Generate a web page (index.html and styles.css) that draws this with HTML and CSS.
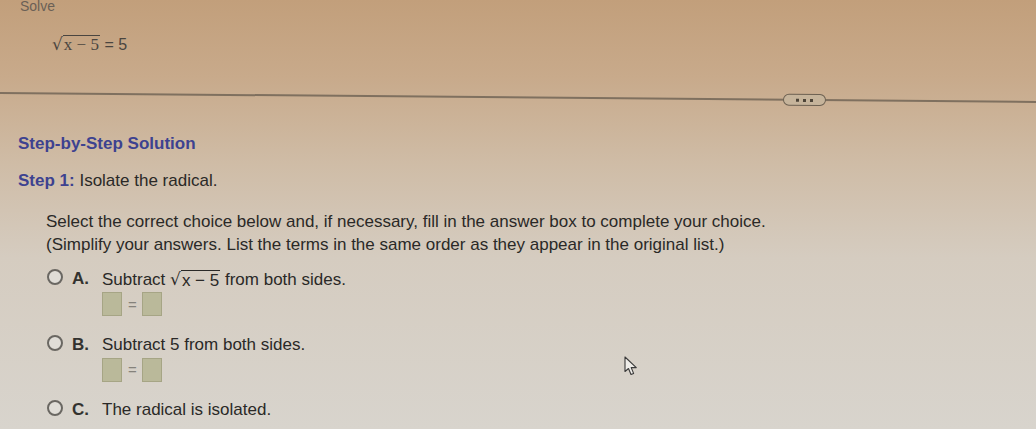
FILE: index.html
```html
<!DOCTYPE html>
<html>
<head>
<meta charset="utf-8">
<link rel="stylesheet" href="styles.css">
</head>
<body>
<div class="page">
  <div class="solve">Solve</div>
  <div class="eq">
    <span class="rad"><span class="rsign">√</span><span class="rbody">x − 5</span></span><span class="eqrest"> = 5</span>
  </div>
  <div class="divider"><span class="pill"><i></i><i></i><i></i></span></div>
  <h2 class="title">Step-by-Step Solution</h2>
  <p class="step"><b>Step 1:</b> Isolate the radical.</p>
  <p class="instr">Select the correct choice below and, if necessary, fill in the answer box to complete your choice.<br>(Simplify your answers. List the terms in the same order as they appear in the original list.)</p>
  <div class="choices">
    <div class="choice">
      <div class="row"><span class="radio"></span><b class="letter">A.</b><span class="ctext">Subtract <span class="rad small"><span class="rsign">√</span><span class="rbody">x − 5</span></span> from both sides.</span></div>
      <div class="boxes"><span class="box"></span><span class="eqs">=</span><span class="box"></span></div>
    </div>
    <div class="choice">
      <div class="row"><span class="radio"></span><b class="letter">B.</b><span class="ctext">Subtract 5 from both sides.</span></div>
      <div class="boxes"><span class="box"></span><span class="eqs">=</span><span class="box"></span></div>
    </div>
    <div class="choice">
      <div class="row"><span class="radio"></span><b class="letter">C.</b><span class="ctext">The radical is isolated.</span></div>
    </div>
  </div>
  <svg class="cursor" width="14" height="20" viewBox="0 0 14 20"><path d="M1 1 L1 15.5 L4.5 12.5 L7 18.5 L9.6 17.4 L7.2 11.6 L12.3 11.6 Z" fill="#efede9" stroke="#3a3a3a" stroke-width="1.1" stroke-linejoin="round"/></svg>
</div>
</body>
</html>
```
FILE: styles.css
```css
html, body { margin: 0; padding: 0; }
body {
  width: 1036px;
  height: 429px;
  overflow: hidden;
  background: linear-gradient(180deg, #c29f7b 0%, #c8aa8b 18%, #cfbca6 38%, #d5ccc0 60%, #d8d4cd 100%);
  font-family: "Liberation Sans", Arial, sans-serif;
  color: #2a2927;
}
.page { position: relative; height: 429px; }
.solve {
  padding-left: 20px;
  font-size: 14px;
  line-height: 12px;
  height: 12px;
  color: #6b6056;
}
.eq {
  padding-left: 52px;
  margin-top: 22px;
  height: 20px;
  font-family: "Liberation Serif", "Times New Roman", serif;
  font-size: 17px;
  color: #4a4540;
}
.rad { display: inline-flex; align-items: flex-end; }
.rsign { font-family: "DejaVu Sans", sans-serif; font-size: 17px; line-height: 20px; }
.rbody { border-top: 1.4px solid #4a4540; padding: 0 1px; line-height: 18px; }
.eqrest { font-family: "Liberation Sans", Arial, sans-serif; font-size: 16px; }
.divider {
  margin-top: 44px;
  height: 1.5px;
  background: #7f705f;
  position: relative;
  transform: rotate(0.5deg);
  transform-origin: 700px 0;
}
.pill {
  position: absolute;
  left: 783px;
  top: -5px;
  width: 41px;
  height: 10px;
  border: 1px solid #6d6152;
  border-radius: 6px;
  background: #c6b49b;
  display: flex;
  align-items: center;
  justify-content: center;
  gap: 4px;
}
.pill i { width: 3px; height: 3px; background: #4d4438; display: block; }
.title {
  margin: 34.5px 0 0 18px;
  font-size: 17px;
  font-weight: bold;
  color: #3d4290;
  line-height: 20px;
}
.step {
  margin: 17px 0 0 18px;
  font-size: 17px;
  line-height: 20px;
}
.step b { color: #3d4290; }
.instr {
  margin: 19px 0 0 46px;
  font-size: 17px;
  line-height: 23px;
}
.choices { margin: 13px 0 0 47px; }
.choice { margin-bottom: 18.5px; }
.row { display: flex; align-items: center; height: 20px; }
.radio {
  width: 16px; height: 16px;
  border: 2px solid #6a6762;
  border-radius: 50%;
  background: #e0ddd7;
  box-sizing: border-box;
  margin-right: 9px;
  position: relative;
  top: -2px;
}
.letter { width: 30px; font-size: 17px; color: #33322f; }
.ctext { font-size: 17px; }
.small .rsign { font-size: 17px; line-height: 21px; }
.small .rbody { font-size: 17px; border-top-color: #2a2927; line-height: 19px; }
.boxes { display: flex; align-items: center; margin: 3px 0 0 55px; height: 24px; }
.box {
  width: 20px; height: 24px;
  background: #bab99a;
  border: 1px solid #a6a585;
  box-sizing: border-box;
}
.eqs { margin: 0 5px 0 6px; width: 9px; font-size: 15px; color: #85827b; }
.cursor { position: absolute; left: 624px; top: 356px; }
```
